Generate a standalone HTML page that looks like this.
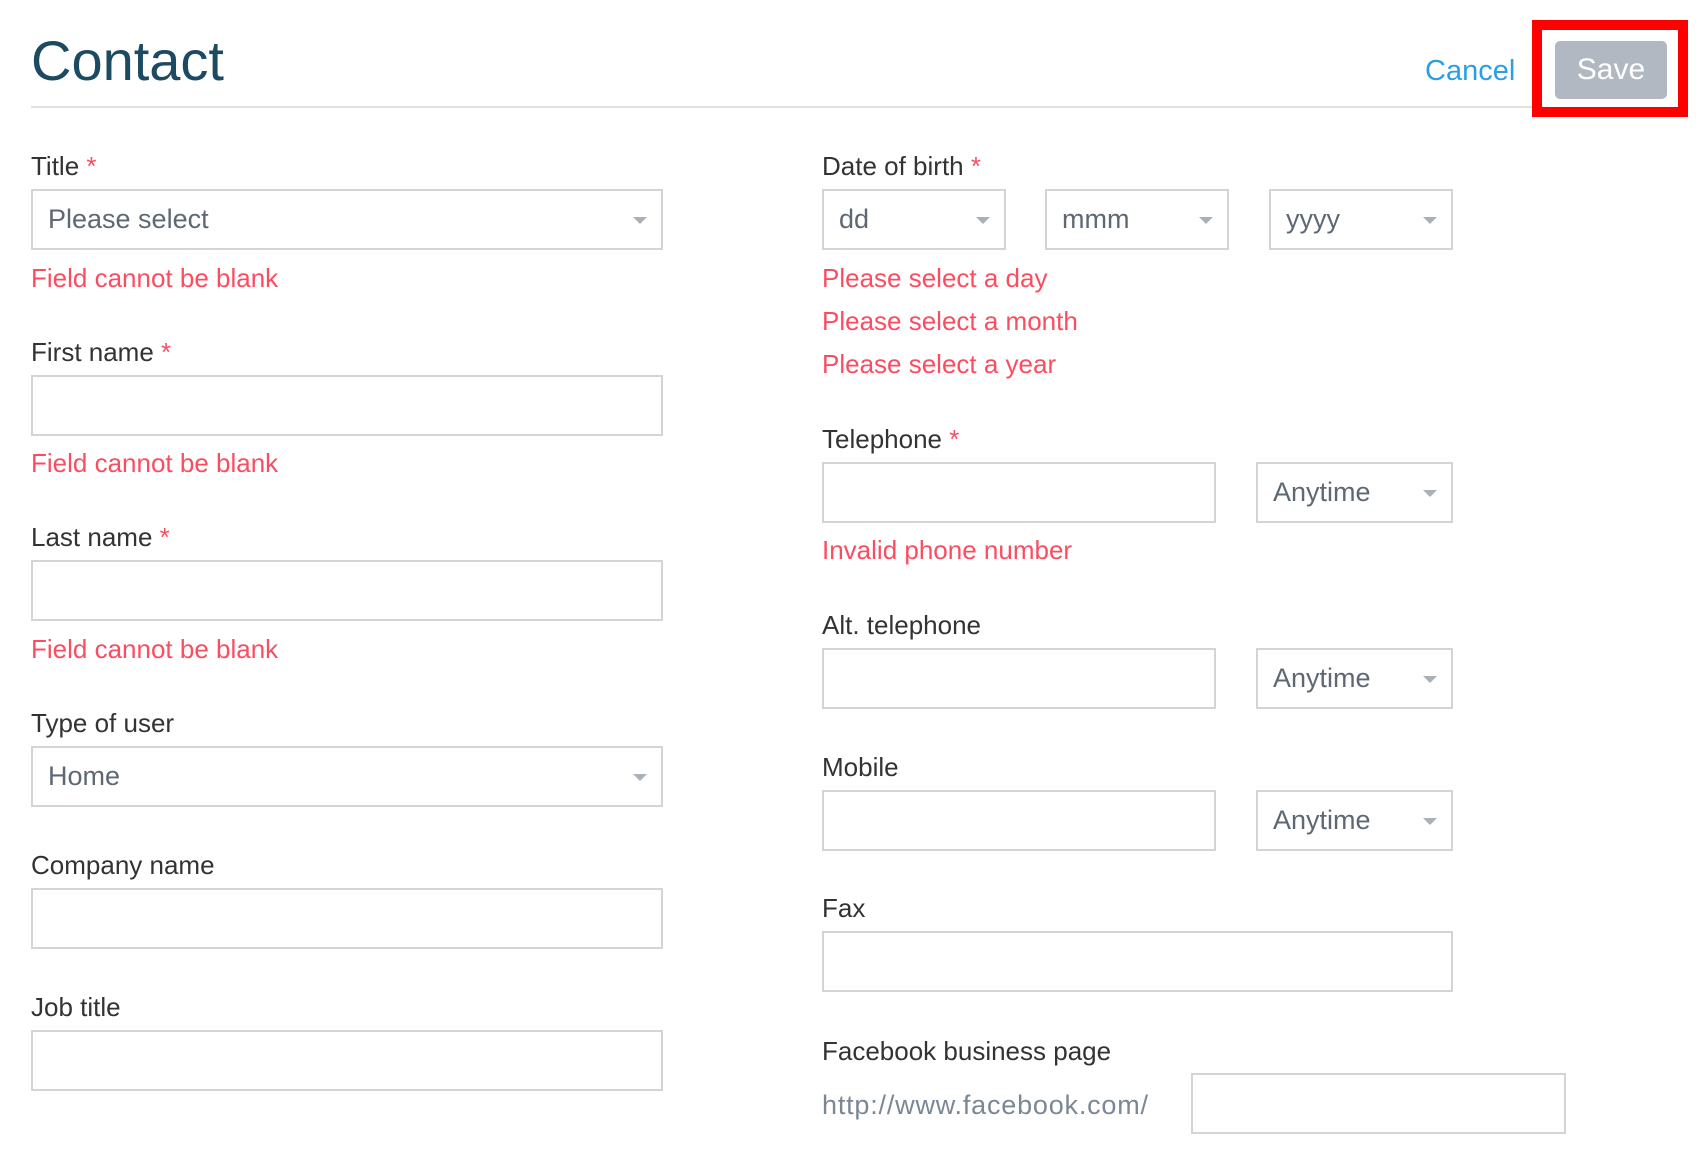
<!DOCTYPE html>
<html><head><meta charset="utf-8"><style>
*{box-sizing:border-box;margin:0;padding:0}
body{width:1696px;height:1155px;background:#fff;position:relative;overflow:hidden;font-family:"Liberation Sans",sans-serif;}
.t{position:absolute;white-space:nowrap;line-height:30px;font-size:26px;color:#333;}
.err{color:#fb4d61}
.req{color:#fb4d61}
.box{position:absolute;border:2px solid #d4d4d4;background:#fff;height:61px;}
.sel{color:#5d6874;font-size:27px;line-height:57px;padding-left:15px}
.sel:after{content:"";position:absolute;right:14px;top:26px;border-left:7px solid transparent;border-right:7px solid transparent;border-top:7px solid #a9b0b8;}
</style></head><body>
<div class="t" style="left:31px;top:28px;font-size:56px;line-height:66px;color:#1b4a62">Contact</div>
<div style="position:absolute;left:31px;top:106px;width:1502px;height:2px;background:#e2e2e2"></div>
<div class="t" style="left:1425px;top:53px;font-size:29px;line-height:36px;color:#2a9fe6">Cancel</div>
<div style="position:absolute;left:1532px;top:20px;width:156px;height:97px;border:10px solid #f00"></div>
<div style="position:absolute;left:1555px;top:41px;width:112px;height:58px;background:#b1b8c1;border-radius:5px;color:#fff;font-size:30px;line-height:58px;text-align:center">Save</div>

<!-- left -->
<div class="t" style="left:31px;top:151px">Title <span class="req">*</span></div>
<div class="box sel" style="left:31px;top:189px;width:632px">Please select</div>
<div class="t err" style="left:31px;top:263px">Field cannot be blank</div>

<div class="t" style="left:31px;top:337px">First name <span class="req">*</span></div>
<div class="box" style="left:31px;top:375px;width:632px"></div>
<div class="t err" style="left:31px;top:448px">Field cannot be blank</div>

<div class="t" style="left:31px;top:522px">Last name <span class="req">*</span></div>
<div class="box" style="left:31px;top:560px;width:632px"></div>
<div class="t err" style="left:31px;top:634px">Field cannot be blank</div>

<div class="t" style="left:31px;top:708px">Type of user</div>
<div class="box sel" style="left:31px;top:746px;width:632px">Home</div>

<div class="t" style="left:31px;top:850px">Company name</div>
<div class="box" style="left:31px;top:888px;width:632px"></div>

<div class="t" style="left:31px;top:992px">Job title</div>
<div class="box" style="left:31px;top:1030px;width:632px"></div>

<!-- right -->
<div class="t" style="left:822px;top:151px">Date of birth <span class="req">*</span></div>
<div class="box sel" style="left:822px;top:189px;width:184px">dd</div>
<div class="box sel" style="left:1045px;top:189px;width:184px">mmm</div>
<div class="box sel" style="left:1269px;top:189px;width:184px">yyyy</div>
<div class="t err" style="left:822px;top:263px">Please select a day</div>
<div class="t err" style="left:822px;top:306px">Please select a month</div>
<div class="t err" style="left:822px;top:349px">Please select a year</div>

<div class="t" style="left:822px;top:424px">Telephone <span class="req">*</span></div>
<div class="box" style="left:822px;top:462px;width:394px"></div>
<div class="box sel" style="left:1256px;top:462px;width:197px">Anytime</div>
<div class="t err" style="left:822px;top:535px">Invalid phone number</div>

<div class="t" style="left:822px;top:610px">Alt. telephone</div>
<div class="box" style="left:822px;top:648px;width:394px"></div>
<div class="box sel" style="left:1256px;top:648px;width:197px">Anytime</div>

<div class="t" style="left:822px;top:752px">Mobile</div>
<div class="box" style="left:822px;top:790px;width:394px"></div>
<div class="box sel" style="left:1256px;top:790px;width:197px">Anytime</div>

<div class="t" style="left:822px;top:893px">Fax</div>
<div class="box" style="left:822px;top:931px;width:631px"></div>

<div class="t" style="left:822px;top:1036px">Facebook business page</div>
<div class="t" style="left:822px;top:1090px;color:#7b8794;font-size:27px;letter-spacing:0.8px">http://www.facebook.com/</div>
<div class="box" style="left:1191px;top:1073px;width:375px;height:61px"></div>
</body></html>
